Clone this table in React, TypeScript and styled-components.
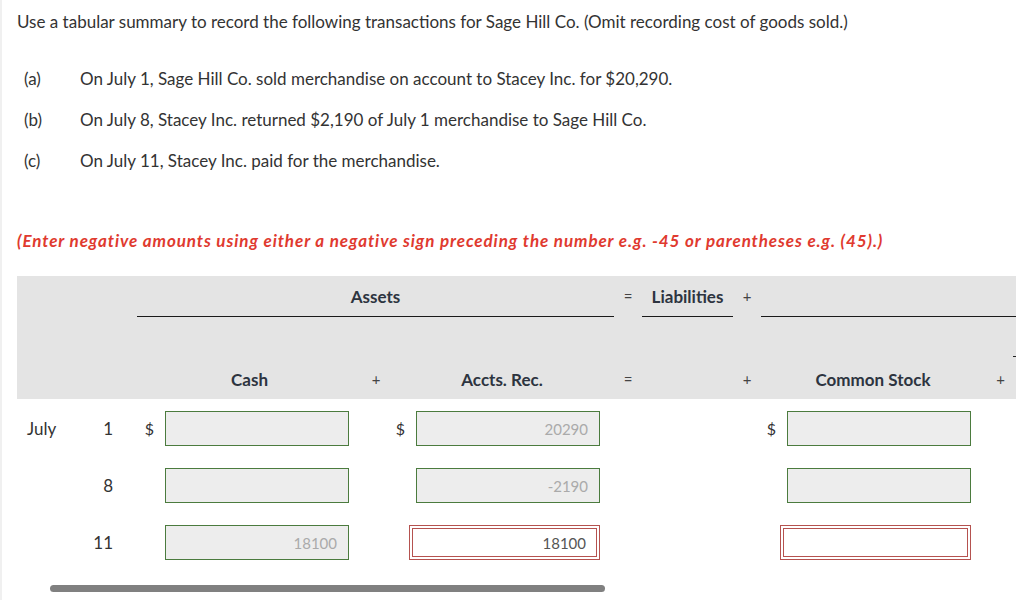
import React from "react";
import styled, { createGlobalStyle } from "styled-components";

const Global = createGlobalStyle`
  html, body { margin: 0; padding: 0; background: #fff; }
  body { font-family: Lato, "Open Sans", Arial, sans-serif; color: #333; }
`;

const Page = styled.div`
  width: 1024px;
  height: 600px;
  box-sizing: border-box;
  border-left: 2px solid #f0f0f0;
  padding: 12px 0 0 15px;
  overflow: hidden;
`;

const Title = styled.p`
  margin: 0;
  font-size: 17px;
  line-height: 20px;
  color: #333;
`;

const List = styled.ol`
  list-style: none;
  margin: 37px 0 0 0;
  padding: 0;
  display: flex;
  flex-direction: column;
  gap: 21px;
`;

const Item = styled.li`
  display: flex;
  font-size: 17px;
  line-height: 20px;
  color: #333;
`;

const ItemLabel = styled.span`
  width: 63px;
  padding-left: 7px;
  box-sizing: border-box;
`;

const Note = styled.p`
  margin: 60px 0 0 0;
  font-size: 17px;
  line-height: 20px;
  font-weight: 700;
  font-style: italic;
  color: #e03a2f;
  letter-spacing: 0.9px;
`;

const Scroller = styled.div`
  margin-top: 25px;
  width: 999px;
`;

const Grid = styled.div`
  display: grid;
  grid-template-columns: 120px 225px 28px 224px 28px 91px 28px 224px 31px;
`;

const HeadCell = styled.div<{ $span?: number; $tall?: boolean }>`
  grid-column: span ${(p) => p.$span ?? 1};
  background: #e4e4e4;
  height: ${(p) => (p.$tall ? "82px" : "41px")};
  box-sizing: border-box;
  display: flex;
  align-items: ${(p) => (p.$tall ? "flex-end" : "center")};
  justify-content: center;
  padding-bottom: ${(p) => (p.$tall ? "10px" : "0")};
  font-size: 17px;
  line-height: 19px;
  font-weight: 700;
  color: #2d3440;
  position: relative;
  white-space: nowrap;
`;

const Line = styled.div`
  position: absolute;
  left: 0;
  right: 0;
  bottom: 0;
  height: 1px;
  background: #1a1a1a;
`;

const Op = styled.span`
  font-weight: 400;
  font-size: 15px;
  color: #444;
`;

const Tick = styled.div`
  position: absolute;
  right: 0;
  top: 39px;
  width: 3px;
  height: 1px;
  background: #222;
`;

const Cell = styled.div`
  height: 57px;
  box-sizing: border-box;
  padding-top: 12px;
`;

const DateCell = styled(Cell)`
  display: flex;
  justify-content: space-between;
  padding-left: 10px;
  padding-right: 24px;
  font-size: 17px;
  line-height: 35px;
  color: #333;
`;

const AmountCell = styled(Cell)<{ $pr: number }>`
  display: flex;
  justify-content: flex-end;
  align-items: flex-start;
  gap: 11px;
  padding-right: ${(p) => p.$pr}px;
`;

const Dollar = styled.span`
  font-size: 16px;
  line-height: 35px;
  color: #333;
`;

const Box = styled.div<{ $state: "ok" | "err" }>`
  height: 35px;
  box-sizing: border-box;
  width: ${(p) => (p.$state === "err" ? "191px" : "184px")};
  display: flex;
  align-items: center;
  justify-content: flex-end;
  padding-right: ${(p) => (p.$state === "err" ? "13px" : "11px")};
  font-size: 15px;
  color: ${(p) => (p.$state === "err" ? "#555" : "#aaa")};
  background: ${(p) => (p.$state === "err" ? "#fff" : "#ededed")};
  border: 1px solid ${(p) => (p.$state === "err" ? "#b5524f" : "#4b7b3e")};
  box-shadow: ${(p) =>
    p.$state === "err" ? "inset 0 0 0 2px #fff, inset 0 0 0 3px #b5524f" : "none"};
`;

const Thumb = styled.div`
  margin: 15px 0 0 33px;
  width: 555px;
  height: 7px;
  border-radius: 4px;
  background: #808080;
`;

type Val = { v: string; s: "ok" | "err" };
type Row = { month?: string; day: string; dollar: boolean; cash: Val; ar: Val; cs: Val };

const rows: Row[] = [
  { month: "July", day: "1", dollar: true, cash: { v: "", s: "ok" }, ar: { v: "20290", s: "ok" }, cs: { v: "", s: "ok" } },
  { day: "8", dollar: false, cash: { v: "", s: "ok" }, ar: { v: "-2190", s: "ok" }, cs: { v: "", s: "ok" } },
  { day: "11", dollar: false, cash: { v: "18100", s: "ok" }, ar: { v: "18100", s: "err" }, cs: { v: "", s: "err" } },
];

function Amount({ show, v, s, pr }: { show: boolean; v: string; s: "ok" | "err"; pr: number }) {
  return (
    <AmountCell $pr={pr}>
      {show && <Dollar>$</Dollar>}
      <Box $state={s}>{v}</Box>
    </AmountCell>
  );
}

export default function App() {
  return (
    <>
      <Global />
      <Page>
        <Title>
          Use a tabular summary to record the following transactions for Sage Hill Co. (Omit recording cost of goods sold.)
        </Title>
        <List>
          <Item>
            <ItemLabel>(a)</ItemLabel>On July 1, Sage Hill Co. sold merchandise on account to Stacey Inc. for $20,290.
          </Item>
          <Item>
            <ItemLabel>(b)</ItemLabel>On July 8, Stacey Inc. returned $2,190 of July 1 merchandise to Sage Hill Co.
          </Item>
          <Item>
            <ItemLabel>(c)</ItemLabel>On July 11, Stacey Inc. paid for the merchandise.
          </Item>
        </List>
        <Note>
          (Enter negative amounts using either a negative sign preceding the number e.g. -45 or parentheses e.g. (45).)
        </Note>
        <Scroller>
          <Grid>
            <HeadCell />
            <HeadCell $span={3}>
              Assets
              <Line />
            </HeadCell>
            <HeadCell>
              <Op>=</Op>
            </HeadCell>
            <HeadCell>
              Liabilities
              <Line />
            </HeadCell>
            <HeadCell>
              <Op>+</Op>
            </HeadCell>
            <HeadCell $span={2}>
              <Line />
            </HeadCell>

            <HeadCell $tall />
            <HeadCell $tall>Cash</HeadCell>
            <HeadCell $tall>
              <Op>+</Op>
            </HeadCell>
            <HeadCell $tall>Accts. Rec.</HeadCell>
            <HeadCell $tall>
              <Op>=</Op>
            </HeadCell>
            <HeadCell $tall />
            <HeadCell $tall>
              <Op>+</Op>
            </HeadCell>
            <HeadCell $tall>Common Stock</HeadCell>
            <HeadCell $tall>
              <Op>+</Op>
              <Tick />
            </HeadCell>

            {rows.map((r) => (
              <React.Fragment key={r.day}>
                <DateCell>
                  <span>{r.month ?? ""}</span>
                  <span>{r.day}</span>
                </DateCell>
                <Amount show={r.dollar} v={r.cash.v} s={r.cash.s} pr={13} />
                <Cell />
                <Amount show={r.dollar} v={r.ar.v} s={r.ar.s} pr={14} />
                <Cell />
                <Cell />
                <Cell />
                <Amount show={r.dollar} v={r.cs.v} s={r.cs.s} pr={14} />
                <Cell />
              </React.Fragment>
            ))}
          </Grid>
          <Thumb />
        </Scroller>
      </Page>
    </>
  );
}
